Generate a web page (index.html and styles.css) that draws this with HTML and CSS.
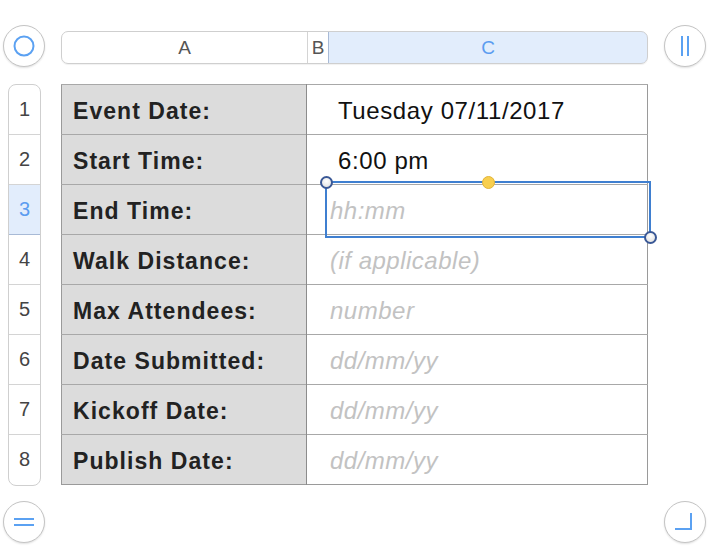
FILE: index.html
```html
<!DOCTYPE html>
<html lang="en">
<head>
    <meta charset="UTF-8">
    <meta name="viewport" content="width=device-width, initial-scale=1.0">
    <title>Event Sheet</title>
    <link rel="stylesheet" href="styles.css">
</head>
<body>
    <div class="sheet">
        <!-- top row: select-all button, column headers, column button -->
        <div class="cell-left top">
            <button class="round-btn">
                <svg width="22" height="22" viewBox="0 0 22 22"><circle cx="11" cy="11" r="9.5" fill="none" stroke="#5ba1f2" stroke-width="2"/></svg>
            </button>
        </div>
        <div class="col-headers">
            <div class="col-head col-a">A</div>
            <div class="col-head col-b">B</div>
            <div class="col-head col-c">C</div>
        </div>
        <div class="cell-right top">
            <button class="round-btn">
                <svg width="22" height="22" viewBox="0 0 22 22"><path d="M8 1v20M14 1v20" stroke="#5ba1f2" stroke-width="2"/></svg>
            </button>
        </div>

        <!-- row numbers -->
        <div class="cell-left">
            <div class="row-headers">
                <div class="row-head">1</div>
                <div class="row-head">2</div>
                <div class="row-head selected">3</div>
                <div class="row-head">4</div>
                <div class="row-head">5</div>
                <div class="row-head">6</div>
                <div class="row-head">7</div>
                <div class="row-head">8</div>
            </div>
        </div>

        <!-- the form table -->
        <div class="table-wrap">
            <table>
                <tr><th>Event Date:</th><td class="value">Tuesday 07/11/2017</td></tr>
                <tr><th>Start Time:</th><td class="value">6:00 pm</td></tr>
                <tr><th>End Time:</th><td class="hint">hh:mm</td></tr>
                <tr><th>Walk Distance:</th><td class="hint">(if applicable)</td></tr>
                <tr><th>Max Attendees:</th><td class="hint">number</td></tr>
                <tr><th>Date Submitted:</th><td class="hint">dd/mm/yy</td></tr>
                <tr><th>Kickoff Date:</th><td class="hint">dd/mm/yy</td></tr>
                <tr><th>Publish Date:</th><td class="hint">dd/mm/yy</td></tr>
            </table>

            <div class="selection">
                <span class="handle tl"></span>
                <span class="handle mid"></span>
                <span class="handle br"></span>
            </div>
        </div>
        <div></div>

        <!-- bottom row buttons -->
        <div class="cell-left bottom">
            <button class="round-btn">
                <svg width="22" height="22" viewBox="0 0 22 22"><path d="M1 8h20M1 14h20" stroke="#5ba1f2" stroke-width="2"/></svg>
            </button>
        </div>
        <div></div>
        <div class="cell-right bottom">
            <button class="round-btn">
                <svg width="22" height="22" viewBox="0 0 22 22"><path d="M17 2v16H1" fill="none" stroke="#5ba1f2" stroke-width="2"/></svg>
            </button>
        </div>
    </div>
</body>
</html>
```

FILE: styles.css
```css
body {
    margin: 0;
    background: #ffffff;
    font-family: "Liberation Sans", Arial, sans-serif;
    color: #222;
}

.sheet {
    display: grid;
    grid-template-columns: 61px 587px 80px;
    grid-template-rows: 84px 402px 70px;
}

.cell-left.top,
.cell-right.top {
    padding-top: 25px;
}

.cell-left {
    padding-left: 3px;
}

.cell-right {
    padding-left: 16px;
}

.cell-left.bottom,
.cell-right.bottom {
    padding-top: 15px;
}

.round-btn {
    width: 42px;
    height: 42px;
    padding: 0;
    border: 1.5px solid #c4c4c4;
    border-radius: 50%;
    background: #fff;
    box-shadow: 0 1px 2px rgba(0, 0, 0, 0.12);
    display: flex;
    align-items: center;
    justify-content: center;
    box-sizing: border-box;
}

.col-headers {
    margin-top: 31px;
    height: 33px;
    display: flex;
    border: 1px solid #cfcfcf;
    border-radius: 7px;
    box-sizing: border-box;
    overflow: hidden;
    box-shadow: 0 1px 1px rgba(0, 0, 0, 0.06);
}

.col-head {
    font-size: 19px;
    color: #555;
    line-height: 31px;
    text-align: center;
}

.col-a {
    width: 245px;
    border-right: 1px solid #d4d4d4;
}

.col-b {
    width: 20px;
    border-right: 1px solid #a8bad6;
}

.col-c {
    flex: 1;
    background: #e2edfc;
    color: #5b9cf0;
    margin: -1px -1px -1px 0;
    border: 1px solid #a8bad6;
    border-left: none;
    border-radius: 0 7px 7px 0;
}

.row-headers {
    margin-left: 5px;
    width: 33px;
    border: 1px solid #cfcfcf;
    border-radius: 8px;
    overflow: hidden;
    box-sizing: border-box;
}

.row-head {
    height: 50px;
    line-height: 49px;
    text-align: center;
    font-size: 20px;
    color: #444;
    border-bottom: 1px solid #d4d4d4;
    box-sizing: border-box;
}

.row-head:last-child {
    border-bottom: none;
}

.row-head.selected {
    background: #e2edfc;
    color: #5b9cf0;
    border-bottom-color: #a8bad6;
}

.table-wrap {
    position: relative;
}

table {
    width: 587px;
    border-collapse: collapse;
    border: 1px solid #9a9a9a;
}

th, td {
    height: 50px;
    box-sizing: border-box;
    border-top: 1px solid #a8a8a8;
    padding: 3px 0 0 0;
    text-align: left;
    white-space: nowrap;
}

th {
    width: 245px;
    background: #dcdcdc;
    border-right: 1px solid #8c8c8c;
    padding-left: 11px;
    font-size: 23px;
    font-weight: bold;
    letter-spacing: 1.05px;
    color: #222;
}

td.value {
    padding-left: 31px;
    font-size: 24px;
    letter-spacing: 0.6px;
    color: #111;
}

td.hint {
    padding-left: 23px;
    font-size: 24px;
    font-style: italic;
    letter-spacing: 0.5px;
    color: #c2c2c2;
}

.selection {
    position: absolute;
    left: 264px;
    top: 97px;
    width: 326px;
    height: 57px;
    border: 2px solid #3f7fd0;
    box-sizing: border-box;
}

.handle {
    position: absolute;
    width: 13px;
    height: 13px;
    border-radius: 50%;
    box-sizing: border-box;
}

.handle.tl,
.handle.br {
    background: radial-gradient(circle at 50% 35%, #ffffff, #dcdcdc);
    border: 2px solid #3a5896;
}

.handle.tl {
    left: -7.5px;
    top: -7.5px;
}

.handle.br {
    right: -7.5px;
    bottom: -7.5px;
}

.handle.mid {
    left: 155px;
    top: -7.5px;
    background: #f8cf4f;
    border: 1px solid #e2b438;
}
```
